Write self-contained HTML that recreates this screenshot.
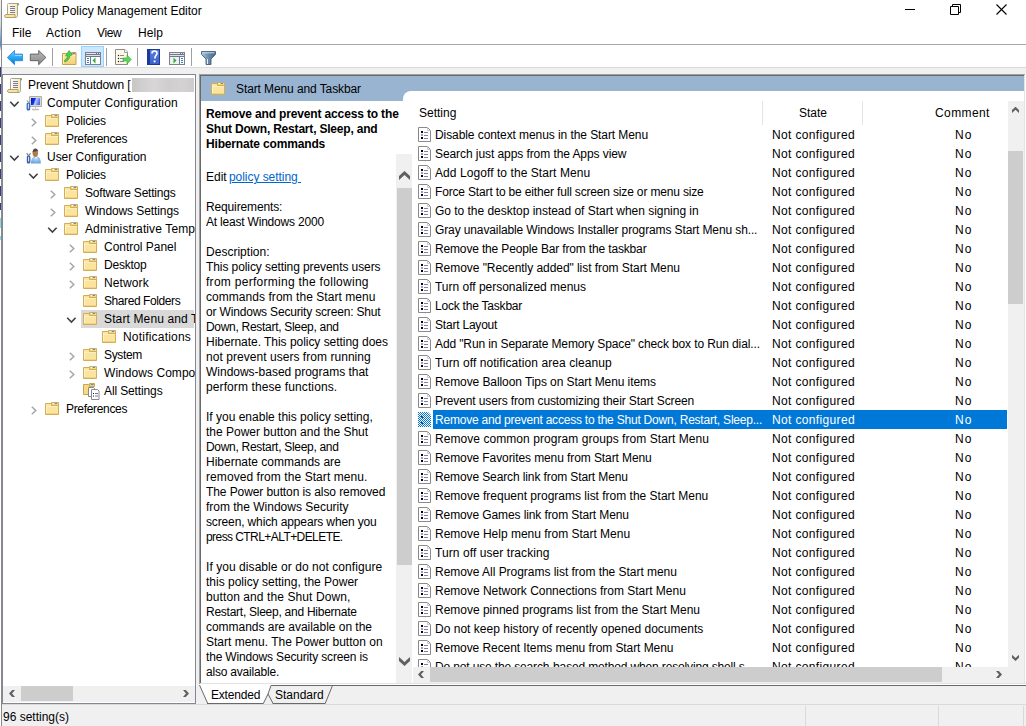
<!DOCTYPE html>
<html><head><meta charset="utf-8">
<style>
*{margin:0;padding:0;box-sizing:border-box}
html,body{width:1026px;height:726px;overflow:hidden;background:#fff}
body{position:relative;font-family:"Liberation Sans",sans-serif;font-size:12px;color:#000}
.a{position:absolute}
.t{position:absolute;white-space:nowrap;line-height:15px}
.tr{position:absolute;white-space:nowrap;line-height:18px;height:18px}
.lr{position:absolute;white-space:nowrap;line-height:19px;height:19px;overflow:hidden}
svg{position:absolute;overflow:visible}
</style></head><body>

<div class="a" style="left:0;top:0;width:1px;height:60px;background:linear-gradient(#f0f0f0,#d8dce8 40%,#4a8ad0 75%,#fff 85%)"></div><div class="a" style="left:0;top:60px;width:1px;height:150px;background:repeating-linear-gradient(#fff 0 7px,#3a3a8a 7px 17px)"></div><div class="a" style="left:0;top:210px;width:1px;height:30px;background:repeating-linear-gradient(#fff 0 8px,#8ad8e8 8px 18px)"></div>
<div class="a" style="left:1px;top:0;width:1px;height:726px;background:#8a8a8a"></div>
<svg style="left:4px;top:3px" width="16" height="16" viewBox="0 0 16 16">
 <defs><linearGradient id="sp" x1="0" y1="0" x2="1" y2="0"><stop offset="0" stop-color="#fffbe8"/><stop offset="1" stop-color="#f6e7b0"/></linearGradient></defs>
 <path d="M3.5 1.5c0-1 1-1 1.5-1h9.5c-0.6 0.6-1 1-1 2v10c0 1-0.5 2-1.5 2h-8.5v-12z" fill="url(#sp)" stroke="#a8a49a"/>
 <path d="M6 3.5h5M6 5.5h5M6 7.5h5M6 9.5h5" stroke="#7a78b0" stroke-width="1"/>
 <path d="M1.5 11.5h9.5v3h-9.5c-1 0-1.2-3 0-3z" fill="#f5e3a0" stroke="#b5a06a"/>
 <circle cx="14" cy="1.5" r="1" fill="#7aa050"/>
</svg>
<div class="t" style="left:25px;top:4px">Group Policy Management Editor</div>
<div class="a" style="left:905px;top:9px;width:10px;height:1px;background:#000"></div>
<svg style="left:950px;top:4px" width="11" height="11" viewBox="0 0 11 11"><path d="M0.5 2.5h8v8h-8z M2.5 2.5v-2h8v8h-2" fill="none" stroke="#000"/></svg>
<svg style="left:996px;top:4px" width="11" height="11" viewBox="0 0 11 11"><path d="M0.5 0.5l10 10M10.5 0.5l-10 10" stroke="#000" stroke-width="1.1"/></svg>
<div class="t" style="left:12px;top:26px;letter-spacing:0px">File</div>
<div class="t" style="left:46px;top:26px;letter-spacing:0.3px">Action</div>
<div class="t" style="left:97px;top:26px;letter-spacing:-0.4px">View</div>
<div class="t" style="left:138px;top:26px;letter-spacing:0.1px">Help</div>
<div class="a" style="left:2px;top:44px;width:1024px;height:1px;background:#a8a8a8"></div>
<svg style="left:7px;top:50px" width="17" height="15" viewBox="0 0 17 15">
<defs><linearGradient id="gb" x1="0" y1="0" x2="0" y2="1"><stop offset="0" stop-color="#6fd0ff"/><stop offset="0.5" stop-color="#2aa8f0"/><stop offset="1" stop-color="#0a70d0"/></linearGradient></defs>
<path d="M0.3 7.5l7.2-7v3.6h8v6.6h-8v4z" fill="url(#gb)" stroke="#2a8ee0" stroke-width="0.9"/>
<path d="M8 5.5h7" stroke="#a8e0ff" stroke-width="0.8"/></svg>
<svg style="left:30px;top:50px" width="17" height="15" viewBox="0 0 17 15">
<defs><linearGradient id="gg" x1="0" y1="0" x2="0" y2="1"><stop offset="0" stop-color="#b8b8b8"/><stop offset="1" stop-color="#8a8a8a"/></linearGradient></defs>
<path d="M15.9 7.5l-7.2-7v3.6h-8.4v6.6h8.4v4z" fill="url(#gg)" stroke="#5a5a5a" stroke-width="0.9"/></svg>
<div class="a" style="left:52px;top:48px;width:1px;height:18px;background:#a0a0a0"></div>
<svg style="left:62px;top:50px" width="15" height="15" viewBox="0 0 15 15">
<defs><linearGradient id="fu" x1="0" y1="0" x2="0" y2="1"><stop offset="0" stop-color="#fde7a6"/><stop offset="1" stop-color="#f3cf78"/></linearGradient></defs>
<path d="M0.5 3.5h7l1 1.5h5.5v9.5h-13.5z" fill="url(#fu)" stroke="#c9a04c"/>
<path d="M9.5 2.5h4.5v3h-4.5z" fill="#f0cd76" stroke="#c9a04c"/>
<path d="M10.5 3.5h2.5" stroke="#3f86e8"/>
<path d="M1.5 5.5v8" stroke="#fdf0c8"/>
<path d="M7.5 5.5h6" stroke="#fdf2cc"/>
<path d="M2.2 10.8c1.5-1.2 3-2.5 3.3-5.2l-2 0.2 3.6-5.3 3.2 4.6-2.2 0.3c-0.5 3.5-2.3 5.5-5.2 6.5z" fill="#4cd04c" stroke="#2a9a2a" stroke-width="0.6"/>
</svg>
<div class="a" style="left:81px;top:46px;width:23px;height:21px;background:#cce8ff;border:1px solid #99d1ff"></div>
<svg style="left:85px;top:52px" width="16" height="13" viewBox="0 0 16 13">
<rect x="0.5" y="0.5" width="15" height="12" fill="#fff" stroke="#80808a"/>
<rect x="1" y="1" width="14" height="1" fill="#e4e6ec"/><rect x="11" y="1" width="1" height="1" fill="#6a7890"/><rect x="13" y="1" width="1" height="1" fill="#6a7890"/>
<path d="M1 2.5h14M1 4.5h14" stroke="#6a7890"/>
<rect x="1" y="3" width="14" height="1" fill="#dfe2e8"/>
<path d="M5.5 5v7" stroke="#6a7890"/>
<rect x="2" y="6" width="2" height="1" fill="#3a78d0"/><rect x="2" y="8" width="2" height="1" fill="#3a78d0"/><rect x="2" y="10" width="2" height="1" fill="#3a78d0"/>
<path d="M7.5 8.5l3-3v6z" fill="#30b030"/>
</svg>
<div class="a" style="left:106px;top:48px;width:1px;height:18px;background:#a0a0a0"></div>
<svg style="left:115px;top:49px" width="17" height="16" viewBox="0 0 17 16">
<path d="M0.5 0.5h9.5l2.5 2.5v12.5h-12z" fill="#fdf8e2" stroke="#8c8c8c"/>
<path d="M9.5 0.5v3h3" fill="#fff" stroke="#a0a0a0"/>
<circle cx="3.5" cy="6.5" r="0.7" fill="#222"/><circle cx="3.5" cy="9.5" r="0.7" fill="#222"/><circle cx="3.5" cy="12.5" r="0.7" fill="#222"/>
<path d="M5 6.5h4M5 9.5h4M5 12.5h4" stroke="#7a78a8" stroke-width="0.9"/>
<path d="M8 9h4v-3l4.3 4.5-4.3 4.5v-3h-4z" fill="#5ad85a" stroke="#34a834" stroke-width="0.6"/>
</svg>
<div class="a" style="left:137px;top:48px;width:1px;height:18px;background:#a0a0a0"></div>
<svg style="left:147px;top:49px" width="13" height="16" viewBox="0 0 13 16">
<defs><linearGradient id="hb" x1="0" y1="0" x2="0" y2="1"><stop offset="0" stop-color="#5a80e0"/><stop offset="1" stop-color="#3a60c8"/></linearGradient></defs>
<rect x="0" y="0" width="13" height="16" fill="#1e3a98"/><rect x="3" y="1" width="9" height="14" fill="url(#hb)"/>
<path d="M5 4.5c0-1.5 1-2.5 2.5-2.5s2.5 1 2.5 2.5c0 1.5-2 2-2 4v1" fill="none" stroke="#fff" stroke-width="1.6"/>
<rect x="6.7" y="11.5" width="1.8" height="1.8" fill="#fff"/>
</svg>
<svg style="left:169px;top:52px" width="16" height="13" viewBox="0 0 16 13">
<rect x="0.5" y="0.5" width="15" height="12" fill="#fff" stroke="#80808a"/>
<rect x="1" y="1" width="14" height="1" fill="#e4e6ec"/><rect x="11" y="1" width="1" height="1" fill="#6a7890"/><rect x="13" y="1" width="1" height="1" fill="#6a7890"/>
<path d="M1 2.5h14M1 4.5h14" stroke="#6a7890"/>
<rect x="1" y="3" width="14" height="1" fill="#dfe2e8"/>
<rect x="1" y="5" width="9" height="7" fill="#f0f0f0"/>
<path d="M10.5 5v7" stroke="#6a7890"/>
<rect x="12" y="6" width="2" height="1" fill="#3a78d0"/><rect x="12" y="8" width="2" height="1" fill="#3a78d0"/><rect x="12" y="10" width="2" height="1" fill="#3a78d0"/>
<path d="M4.5 5.5l3 3-3 3z" fill="#30b030"/>
</svg>
<div class="a" style="left:191px;top:48px;width:1px;height:18px;background:#a0a0a0"></div>
<svg style="left:201px;top:51px" width="15" height="14" viewBox="0 0 15 14">
<defs><linearGradient id="gf" x1="0" y1="0" x2="1" y2="0"><stop offset="0" stop-color="#a8c8e8"/><stop offset="0.5" stop-color="#6a8aa8"/><stop offset="1" stop-color="#4a6a88"/></linearGradient></defs>
<path d="M0.5 0.5h14v3l-4.5 4.5v5.5h-5v-5.5l-4.5-4.5z" fill="url(#gf)" stroke="#4a6078" stroke-width="0.9"/>
<path d="M1.5 1.8h12" stroke="#c8e4ff" stroke-width="0.9"/>
<path d="M6.5 8v5" stroke="#e0f0ff" stroke-width="1"/>
</svg>
<div class="a" style="left:2px;top:67px;width:1024px;height:1px;background:#dadada"></div>
<div class="a" style="left:2px;top:68px;width:1024px;height:658px;background:#f0f0f0"></div>
<div class="a" style="left:2px;top:74px;width:194px;height:630px;border:1px solid #828790;background:#fff"></div>
<div class="a" style="left:132px;top:78px;width:62px;height:14px;background:linear-gradient(90deg,#c8c5c5,#d2d0d0 20%,#d8d6d6 35%,#cfcdcd 60%,#d4d2d2 80%,#cecbcb)"></div>
<svg style="left:7px;top:78px" width="16" height="16" viewBox="0 0 16 16">
 <defs><linearGradient id="sp2" x1="0" y1="0" x2="1" y2="0"><stop offset="0" stop-color="#fffbe8"/><stop offset="1" stop-color="#f6e7b0"/></linearGradient></defs>
 <path d="M3.5 1.5c0-1 1-1 1.5-1h9.5c-0.6 0.6-1 1-1 2v10c0 1-0.5 2-1.5 2h-8.5v-12z" fill="url(#sp2)" stroke="#a8a49a"/>
 <path d="M6 3.5h5M6 5.5h5M6 7.5h5M6 9.5h5" stroke="#7a78b0" stroke-width="1"/>
 <path d="M1.5 11.5h9.5v3h-9.5c-1 0-1.2-3 0-3z" fill="#f5e3a0" stroke="#b5a06a"/>
 <circle cx="14" cy="1.5" r="1" fill="#7aa050"/>
</svg>
<div class="a" style="left:81px;top:310px;width:113px;height:18px;background:#d9d9d9"></div>
<div class="a" style="left:3px;top:75px;width:192px;height:611px;overflow:hidden">
<div class="tr" style="left:25px;top:1px;letter-spacing:-0.124px">Prevent Shutdown [</div>
<svg style="left:6px;top:26px" width="10" height="6" viewBox="0 0 10 6"><path d="M1.2 0.8l4.2 4.2 4.2-4.2" fill="none" stroke="#404040" stroke-width="1.6"/></svg>
<svg style="left:23px;top:21px" width="17" height="15" viewBox="0 0 17 15">
<defs><linearGradient id="gs" x1="0" y1="0" x2="1" y2="0.3"><stop offset="0" stop-color="#0010b8"/><stop offset="0.45" stop-color="#1838e8"/><stop offset="0.6" stop-color="#b8d0ff"/><stop offset="1" stop-color="#5070f0"/></linearGradient></defs>
<path d="M3.5 0.5h12v10h-12z" fill="#dcdad0" stroke="#b0aea4"/>
<rect x="5" y="2" width="9" height="7" fill="url(#gs)"/>
<path d="M6 13.5h7" stroke="#c0beb4" stroke-width="1.6"/><path d="M9.5 10.5v2" stroke="#c8c6bc"/>
<path d="M0.8 4.2l1.2 1.8h1l1.2-1.8" fill="none" stroke="#a8a8a8" stroke-width="1.1"/>
<rect x="0.6" y="6.5" width="3.6" height="8" rx="1.5" fill="#3a68b8"/><rect x="1.9" y="7.8" width="1" height="4.8" fill="#d8f0ff"/>
</svg>
<div class="tr" style="left:44px;top:19px;letter-spacing:0.157px">Computer Configuration</div>
<svg style="left:28px;top:43px" width="6" height="9" viewBox="0 0 6 9"><path d="M0.8 0.8l4 3.7-4 3.7" fill="none" stroke="#a6a6a6" stroke-width="1.5"/></svg>
<svg style="left:42px;top:39px" width="14" height="13" viewBox="0 0 14 13">
<path d="M0.5 1.5h5.5l1 1.5h6.5v9.5h-13z" fill="#f9dc8c" stroke="#d2ae58"/>
<path d="M1 2h5l1 2h6v8h-12z" fill="#fbe4a0"/>
<path d="M1 4.5h12" stroke="#fdf0c0" stroke-width="1"/>
<path d="M1.5 3v9" stroke="#fdf2c8" stroke-width="1"/>
<path d="M1 11.5h12" stroke="#f3d47e" stroke-width="1"/>
<path d="M6.5 0.5h7v3h-7z" fill="#f6d77e" stroke="#d2ae58"/>
<path d="M8 1.5h4" stroke="#4f8ee8" stroke-width="1"/><path d="M8 1.5h1.5" stroke="#fff" stroke-width="1"/>
</svg>
<div class="tr" style="left:63px;top:37px;letter-spacing:-0.2px">Policies</div>
<svg style="left:28px;top:61px" width="6" height="9" viewBox="0 0 6 9"><path d="M0.8 0.8l4 3.7-4 3.7" fill="none" stroke="#a6a6a6" stroke-width="1.5"/></svg>
<svg style="left:42px;top:57px" width="14" height="13" viewBox="0 0 14 13">
<path d="M0.5 1.5h5.5l1 1.5h6.5v9.5h-13z" fill="#f9dc8c" stroke="#d2ae58"/>
<path d="M1 2h5l1 2h6v8h-12z" fill="#fbe4a0"/>
<path d="M1 4.5h12" stroke="#fdf0c0" stroke-width="1"/>
<path d="M1.5 3v9" stroke="#fdf2c8" stroke-width="1"/>
<path d="M1 11.5h12" stroke="#f3d47e" stroke-width="1"/>
<path d="M6.5 0.5h7v3h-7z" fill="#f6d77e" stroke="#d2ae58"/>
<path d="M8 1.5h4" stroke="#4f8ee8" stroke-width="1"/><path d="M8 1.5h1.5" stroke="#fff" stroke-width="1"/>
</svg>
<div class="tr" style="left:63px;top:55px;letter-spacing:-0.33px">Preferences</div>
<svg style="left:6px;top:80px" width="10" height="6" viewBox="0 0 10 6"><path d="M1.2 0.8l4.2 4.2 4.2-4.2" fill="none" stroke="#404040" stroke-width="1.6"/></svg>
<svg style="left:23px;top:73px" width="16" height="16" viewBox="0 0 16 16">
<defs><radialGradient id="gu" cx="0.5" cy="0.3" r="0.7"><stop offset="0" stop-color="#b8dcff"/><stop offset="1" stop-color="#6aa0d8"/></radialGradient></defs>
<path d="M5 15.5c0-4.5 1.5-7 5-7s4.8 2.5 4.8 7z" fill="url(#gu)"/>
<path d="M9 9l1 2 1-2z" fill="#fff"/>
<ellipse cx="9.3" cy="5.2" rx="2.7" ry="3.7" fill="#b87848"/>
<path d="M6.6 4.6c0-3 1.2-4.1 2.8-4.1s2.9 1.1 2.9 4.2l-0.6-1.6c-1.2 0.2-3.2 0.4-5.1 1.5z" fill="#4a4a4a"/>
<path d="M0.7 5.2l1.3 2h1.2l1.3-2" fill="none" stroke="#8a8a8a" stroke-width="1.2"/>
<rect x="0.8" y="7.5" width="3.6" height="8" rx="1.5" fill="#3a5ab0"/><rect x="2.1" y="8.8" width="1" height="4.8" fill="#d8f0ff"/>
</svg>
<div class="tr" style="left:44px;top:73px;letter-spacing:-0.035px">User Configuration</div>
<svg style="left:25px;top:98px" width="10" height="6" viewBox="0 0 10 6"><path d="M1.2 0.8l4.2 4.2 4.2-4.2" fill="none" stroke="#404040" stroke-width="1.6"/></svg>
<svg style="left:42px;top:93px" width="14" height="13" viewBox="0 0 14 13">
<path d="M0.5 1.5h5.5l1 1.5h6.5v9.5h-13z" fill="#f9dc8c" stroke="#d2ae58"/>
<path d="M1 2h5l1 2h6v8h-12z" fill="#fbe4a0"/>
<path d="M1 4.5h12" stroke="#fdf0c0" stroke-width="1"/>
<path d="M1.5 3v9" stroke="#fdf2c8" stroke-width="1"/>
<path d="M1 11.5h12" stroke="#f3d47e" stroke-width="1"/>
<path d="M6.5 0.5h7v3h-7z" fill="#f6d77e" stroke="#d2ae58"/>
<path d="M8 1.5h4" stroke="#4f8ee8" stroke-width="1"/><path d="M8 1.5h1.5" stroke="#fff" stroke-width="1"/>
</svg>
<div class="tr" style="left:63px;top:91px;letter-spacing:-0.2px">Policies</div>
<svg style="left:47px;top:115px" width="6" height="9" viewBox="0 0 6 9"><path d="M0.8 0.8l4 3.7-4 3.7" fill="none" stroke="#a6a6a6" stroke-width="1.5"/></svg>
<svg style="left:61px;top:111px" width="14" height="13" viewBox="0 0 14 13">
<path d="M0.5 1.5h5.5l1 1.5h6.5v9.5h-13z" fill="#f9dc8c" stroke="#d2ae58"/>
<path d="M1 2h5l1 2h6v8h-12z" fill="#fbe4a0"/>
<path d="M1 4.5h12" stroke="#fdf0c0" stroke-width="1"/>
<path d="M1.5 3v9" stroke="#fdf2c8" stroke-width="1"/>
<path d="M1 11.5h12" stroke="#f3d47e" stroke-width="1"/>
<path d="M6.5 0.5h7v3h-7z" fill="#f6d77e" stroke="#d2ae58"/>
<path d="M8 1.5h4" stroke="#4f8ee8" stroke-width="1"/><path d="M8 1.5h1.5" stroke="#fff" stroke-width="1"/>
</svg>
<div class="tr" style="left:82px;top:109px;letter-spacing:-0.206px">Software Settings</div>
<svg style="left:47px;top:133px" width="6" height="9" viewBox="0 0 6 9"><path d="M0.8 0.8l4 3.7-4 3.7" fill="none" stroke="#a6a6a6" stroke-width="1.5"/></svg>
<svg style="left:61px;top:129px" width="14" height="13" viewBox="0 0 14 13">
<path d="M0.5 1.5h5.5l1 1.5h6.5v9.5h-13z" fill="#f9dc8c" stroke="#d2ae58"/>
<path d="M1 2h5l1 2h6v8h-12z" fill="#fbe4a0"/>
<path d="M1 4.5h12" stroke="#fdf0c0" stroke-width="1"/>
<path d="M1.5 3v9" stroke="#fdf2c8" stroke-width="1"/>
<path d="M1 11.5h12" stroke="#f3d47e" stroke-width="1"/>
<path d="M6.5 0.5h7v3h-7z" fill="#f6d77e" stroke="#d2ae58"/>
<path d="M8 1.5h4" stroke="#4f8ee8" stroke-width="1"/><path d="M8 1.5h1.5" stroke="#fff" stroke-width="1"/>
</svg>
<div class="tr" style="left:82px;top:127px;letter-spacing:-0.093px">Windows Settings</div>
<svg style="left:44px;top:152px" width="10" height="6" viewBox="0 0 10 6"><path d="M1.2 0.8l4.2 4.2 4.2-4.2" fill="none" stroke="#404040" stroke-width="1.6"/></svg>
<svg style="left:61px;top:147px" width="14" height="13" viewBox="0 0 14 13">
<path d="M0.5 1.5h5.5l1 1.5h6.5v9.5h-13z" fill="#f9dc8c" stroke="#d2ae58"/>
<path d="M1 2h5l1 2h6v8h-12z" fill="#fbe4a0"/>
<path d="M1 4.5h12" stroke="#fdf0c0" stroke-width="1"/>
<path d="M1.5 3v9" stroke="#fdf2c8" stroke-width="1"/>
<path d="M1 11.5h12" stroke="#f3d47e" stroke-width="1"/>
<path d="M6.5 0.5h7v3h-7z" fill="#f6d77e" stroke="#d2ae58"/>
<path d="M8 1.5h4" stroke="#4f8ee8" stroke-width="1"/><path d="M8 1.5h1.5" stroke="#fff" stroke-width="1"/>
</svg>
<div class="tr" style="left:82px;top:145px;letter-spacing:0.12px">Administrative Templates: Policy definitions</div>
<svg style="left:66px;top:169px" width="6" height="9" viewBox="0 0 6 9"><path d="M0.8 0.8l4 3.7-4 3.7" fill="none" stroke="#a6a6a6" stroke-width="1.5"/></svg>
<svg style="left:80px;top:165px" width="14" height="13" viewBox="0 0 14 13">
<path d="M0.5 1.5h5.5l1 1.5h6.5v9.5h-13z" fill="#f9dc8c" stroke="#d2ae58"/>
<path d="M1 2h5l1 2h6v8h-12z" fill="#fbe4a0"/>
<path d="M1 4.5h12" stroke="#fdf0c0" stroke-width="1"/>
<path d="M1.5 3v9" stroke="#fdf2c8" stroke-width="1"/>
<path d="M1 11.5h12" stroke="#f3d47e" stroke-width="1"/>
<path d="M6.5 0.5h7v3h-7z" fill="#f6d77e" stroke="#d2ae58"/>
<path d="M8 1.5h4" stroke="#4f8ee8" stroke-width="1"/><path d="M8 1.5h1.5" stroke="#fff" stroke-width="1"/>
</svg>
<div class="tr" style="left:101px;top:163px;letter-spacing:-0.025px">Control Panel</div>
<svg style="left:66px;top:187px" width="6" height="9" viewBox="0 0 6 9"><path d="M0.8 0.8l4 3.7-4 3.7" fill="none" stroke="#a6a6a6" stroke-width="1.5"/></svg>
<svg style="left:80px;top:183px" width="14" height="13" viewBox="0 0 14 13">
<path d="M0.5 1.5h5.5l1 1.5h6.5v9.5h-13z" fill="#f9dc8c" stroke="#d2ae58"/>
<path d="M1 2h5l1 2h6v8h-12z" fill="#fbe4a0"/>
<path d="M1 4.5h12" stroke="#fdf0c0" stroke-width="1"/>
<path d="M1.5 3v9" stroke="#fdf2c8" stroke-width="1"/>
<path d="M1 11.5h12" stroke="#f3d47e" stroke-width="1"/>
<path d="M6.5 0.5h7v3h-7z" fill="#f6d77e" stroke="#d2ae58"/>
<path d="M8 1.5h4" stroke="#4f8ee8" stroke-width="1"/><path d="M8 1.5h1.5" stroke="#fff" stroke-width="1"/>
</svg>
<div class="tr" style="left:101px;top:181px;letter-spacing:-0.217px">Desktop</div>
<svg style="left:66px;top:205px" width="6" height="9" viewBox="0 0 6 9"><path d="M0.8 0.8l4 3.7-4 3.7" fill="none" stroke="#a6a6a6" stroke-width="1.5"/></svg>
<svg style="left:80px;top:201px" width="14" height="13" viewBox="0 0 14 13">
<path d="M0.5 1.5h5.5l1 1.5h6.5v9.5h-13z" fill="#f9dc8c" stroke="#d2ae58"/>
<path d="M1 2h5l1 2h6v8h-12z" fill="#fbe4a0"/>
<path d="M1 4.5h12" stroke="#fdf0c0" stroke-width="1"/>
<path d="M1.5 3v9" stroke="#fdf2c8" stroke-width="1"/>
<path d="M1 11.5h12" stroke="#f3d47e" stroke-width="1"/>
<path d="M6.5 0.5h7v3h-7z" fill="#f6d77e" stroke="#d2ae58"/>
<path d="M8 1.5h4" stroke="#4f8ee8" stroke-width="1"/><path d="M8 1.5h1.5" stroke="#fff" stroke-width="1"/>
</svg>
<div class="tr" style="left:101px;top:199px;letter-spacing:0.117px">Network</div>
<svg style="left:80px;top:219px" width="14" height="13" viewBox="0 0 14 13">
<path d="M0.5 1.5h5.5l1 1.5h6.5v9.5h-13z" fill="#f9dc8c" stroke="#d2ae58"/>
<path d="M1 2h5l1 2h6v8h-12z" fill="#fbe4a0"/>
<path d="M1 4.5h12" stroke="#fdf0c0" stroke-width="1"/>
<path d="M1.5 3v9" stroke="#fdf2c8" stroke-width="1"/>
<path d="M1 11.5h12" stroke="#f3d47e" stroke-width="1"/>
<path d="M6.5 0.5h7v3h-7z" fill="#f6d77e" stroke="#d2ae58"/>
<path d="M8 1.5h4" stroke="#4f8ee8" stroke-width="1"/><path d="M8 1.5h1.5" stroke="#fff" stroke-width="1"/>
</svg>
<div class="tr" style="left:101px;top:217px;letter-spacing:-0.415px">Shared Folders</div>
<svg style="left:63px;top:242px" width="10" height="6" viewBox="0 0 10 6"><path d="M1.2 0.8l4.2 4.2 4.2-4.2" fill="none" stroke="#404040" stroke-width="1.6"/></svg>
<svg style="left:80px;top:237px" width="14" height="13" viewBox="0 0 14 13">
<path d="M0.5 1.5h5.5l1 1.5h6.5v9.5h-13z" fill="#f9dc8c" stroke="#d2ae58"/>
<path d="M1 2h5l1 2h6v8h-12z" fill="#fbe4a0"/>
<path d="M1 4.5h12" stroke="#fdf0c0" stroke-width="1"/>
<path d="M1.5 3v9" stroke="#fdf2c8" stroke-width="1"/>
<path d="M1 11.5h12" stroke="#f3d47e" stroke-width="1"/>
<path d="M6.5 0.5h7v3h-7z" fill="#f6d77e" stroke="#d2ae58"/>
<path d="M8 1.5h4" stroke="#4f8ee8" stroke-width="1"/><path d="M8 1.5h1.5" stroke="#fff" stroke-width="1"/>
</svg>
<div class="tr" style="left:101px;top:235px;letter-spacing:0.13px">Start Menu and Taskbar</div>
<svg style="left:99px;top:255px" width="14" height="13" viewBox="0 0 14 13">
<path d="M0.5 1.5h5.5l1 1.5h6.5v9.5h-13z" fill="#f9dc8c" stroke="#d2ae58"/>
<path d="M1 2h5l1 2h6v8h-12z" fill="#fbe4a0"/>
<path d="M1 4.5h12" stroke="#fdf0c0" stroke-width="1"/>
<path d="M1.5 3v9" stroke="#fdf2c8" stroke-width="1"/>
<path d="M1 11.5h12" stroke="#f3d47e" stroke-width="1"/>
<path d="M6.5 0.5h7v3h-7z" fill="#f6d77e" stroke="#d2ae58"/>
<path d="M8 1.5h4" stroke="#4f8ee8" stroke-width="1"/><path d="M8 1.5h1.5" stroke="#fff" stroke-width="1"/>
</svg>
<div class="tr" style="left:120px;top:253px;letter-spacing:0.208px">Notifications</div>
<svg style="left:66px;top:277px" width="6" height="9" viewBox="0 0 6 9"><path d="M0.8 0.8l4 3.7-4 3.7" fill="none" stroke="#a6a6a6" stroke-width="1.5"/></svg>
<svg style="left:80px;top:273px" width="14" height="13" viewBox="0 0 14 13">
<path d="M0.5 1.5h5.5l1 1.5h6.5v9.5h-13z" fill="#f9dc8c" stroke="#d2ae58"/>
<path d="M1 2h5l1 2h6v8h-12z" fill="#fbe4a0"/>
<path d="M1 4.5h12" stroke="#fdf0c0" stroke-width="1"/>
<path d="M1.5 3v9" stroke="#fdf2c8" stroke-width="1"/>
<path d="M1 11.5h12" stroke="#f3d47e" stroke-width="1"/>
<path d="M6.5 0.5h7v3h-7z" fill="#f6d77e" stroke="#d2ae58"/>
<path d="M8 1.5h4" stroke="#4f8ee8" stroke-width="1"/><path d="M8 1.5h1.5" stroke="#fff" stroke-width="1"/>
</svg>
<div class="tr" style="left:101px;top:271px;letter-spacing:-0.36px">System</div>
<svg style="left:66px;top:295px" width="6" height="9" viewBox="0 0 6 9"><path d="M0.8 0.8l4 3.7-4 3.7" fill="none" stroke="#a6a6a6" stroke-width="1.5"/></svg>
<svg style="left:80px;top:291px" width="14" height="13" viewBox="0 0 14 13">
<path d="M0.5 1.5h5.5l1 1.5h6.5v9.5h-13z" fill="#f9dc8c" stroke="#d2ae58"/>
<path d="M1 2h5l1 2h6v8h-12z" fill="#fbe4a0"/>
<path d="M1 4.5h12" stroke="#fdf0c0" stroke-width="1"/>
<path d="M1.5 3v9" stroke="#fdf2c8" stroke-width="1"/>
<path d="M1 11.5h12" stroke="#f3d47e" stroke-width="1"/>
<path d="M6.5 0.5h7v3h-7z" fill="#f6d77e" stroke="#d2ae58"/>
<path d="M8 1.5h4" stroke="#4f8ee8" stroke-width="1"/><path d="M8 1.5h1.5" stroke="#fff" stroke-width="1"/>
</svg>
<div class="tr" style="left:101px;top:289px;letter-spacing:0.05px">Windows Components</div>
<svg style="left:80px;top:308px" width="17" height="17" viewBox="0 0 17 17">
<path d="M0.5 1.5h5l1 1h4v9h-10z" fill="#f8da86" stroke="#c9a451"/>
<path d="M6.5 0.5h5v3h-5z" fill="#f4d37a" stroke="#c9a451"/><path d="M8 1.5h2.5" stroke="#4f8ee8"/>
<path d="M5.5 4.5h5l1 1v8h-6z" fill="#fff" stroke="#8a8a8a"/>
<path d="M8.5 6.5h6l1.5 1.5v8.5h-7.5z" fill="#fff" stroke="#8a8a8a"/>
<path d="M10 10.5h1M10 13h1" stroke="#222"/><path d="M12 10.5h3M12 13h3" stroke="#7070b0"/>
</svg>
<div class="tr" style="left:101px;top:307px;letter-spacing:-0.127px">All Settings</div>
<svg style="left:28px;top:331px" width="6" height="9" viewBox="0 0 6 9"><path d="M0.8 0.8l4 3.7-4 3.7" fill="none" stroke="#a6a6a6" stroke-width="1.5"/></svg>
<svg style="left:42px;top:327px" width="14" height="13" viewBox="0 0 14 13">
<path d="M0.5 1.5h5.5l1 1.5h6.5v9.5h-13z" fill="#f9dc8c" stroke="#d2ae58"/>
<path d="M1 2h5l1 2h6v8h-12z" fill="#fbe4a0"/>
<path d="M1 4.5h12" stroke="#fdf0c0" stroke-width="1"/>
<path d="M1.5 3v9" stroke="#fdf2c8" stroke-width="1"/>
<path d="M1 11.5h12" stroke="#f3d47e" stroke-width="1"/>
<path d="M6.5 0.5h7v3h-7z" fill="#f6d77e" stroke="#d2ae58"/>
<path d="M8 1.5h4" stroke="#4f8ee8" stroke-width="1"/><path d="M8 1.5h1.5" stroke="#fff" stroke-width="1"/>
</svg>
<div class="tr" style="left:63px;top:325px;letter-spacing:-0.33px">Preferences</div>
</div>
<div class="a" style="left:3px;top:686px;width:192px;height:16px;background:#f0f0f0"></div>
<div class="a" style="left:21px;top:686px;width:52px;height:15px;background:#cdcdcd"></div>
<div class="a" style="left:199px;top:74px;width:827px;height:610px;background:#fff;border-left:1px solid #a0a0a0;border-top:1px solid #a0a0a0"></div>
<div class="a" style="left:200px;top:75px;width:826px;height:608px;border-left:1px solid #696969;border-top:1px solid #696969"></div>
<div class="a" style="left:1024px;top:75px;width:1px;height:609px;background:#e3e3e3"></div>
<div class="a" style="left:1025px;top:74px;width:1px;height:611px;background:#fff"></div>
<div class="a" style="left:200px;top:683px;width:826px;height:1px;background:#e3e3e3"></div>
<div class="a" style="left:201px;top:76px;width:823px;height:25px;background:#99b4d1"></div>
<svg style="left:211px;top:82px" width="14" height="13" viewBox="0 0 14 13">
<path d="M0.5 1.5h5.5l1 1.5h6.5v9.5h-13z" fill="#f9dc8c" stroke="#d2ae58"/>
<path d="M1 2h5l1 2h6v8h-12z" fill="#fbe4a0"/>
<path d="M1 4.5h12" stroke="#fdf0c0" stroke-width="1"/>
<path d="M1.5 3v9" stroke="#fdf2c8" stroke-width="1"/>
<path d="M1 11.5h12" stroke="#f3d47e" stroke-width="1"/>
<path d="M6.5 0.5h7v3h-7z" fill="#f6d77e" stroke="#d2ae58"/>
<path d="M8 1.5h4" stroke="#4f8ee8" stroke-width="1"/><path d="M8 1.5h1.5" stroke="#fff" stroke-width="1"/>
</svg>
<div class="t" style="left:236px;top:82px;color:#000;letter-spacing:-0.1px">Start Menu and Taskbar</div>
<div class="a" style="left:201px;top:101px;width:211px;height:582px;background:#fff"></div>
<div class="a" style="left:403px;top:91px;width:621px;height:576px;background:#fff;border-top-left-radius:8px"></div>
<div class="a" style="left:396px;top:101px;width:17px;height:582px;background:#fff"></div>
<div class="t" style="left:206px;top:107px;font-weight:bold;letter-spacing:-0.148px">Remove and prevent access to the</div>
<div class="t" style="left:206px;top:122px;font-weight:bold;letter-spacing:-0.197px">Shut Down, Restart, Sleep, and</div>
<div class="t" style="left:206px;top:137px;font-weight:bold;letter-spacing:-0.165px">Hibernate commands</div>
<div class="t" style="left:206px;top:170px">Edit</div>
<div class="t" style="left:229px;top:170px;color:#0066cc;text-decoration:underline;letter-spacing:-0.05px">policy setting&nbsp;</div>
<div class="t" style="left:206px;top:200px;letter-spacing:-0.142px">Requirements:</div>
<div class="t" style="left:206px;top:215px;letter-spacing:-0.2px">At least Windows 2000</div>
<div class="t" style="left:206px;top:245px;letter-spacing:0.018px">Description:</div>
<div class="t" style="left:206px;top:260px;letter-spacing:-0.085px">This policy setting prevents users</div>
<div class="t" style="left:206px;top:275px;letter-spacing:0.279px">from performing the following</div>
<div class="t" style="left:206px;top:290px;letter-spacing:0.048px">commands from the Start menu</div>
<div class="t" style="left:206px;top:305px;letter-spacing:-0.174px">or Windows Security screen: Shut</div>
<div class="t" style="left:206px;top:320px;letter-spacing:-0.296px">Down, Restart, Sleep, and</div>
<div class="t" style="left:206px;top:335px;letter-spacing:-0.038px">Hibernate. This policy setting does</div>
<div class="t" style="left:206px;top:350px;letter-spacing:0.045px">not prevent users from running</div>
<div class="t" style="left:206px;top:365px;letter-spacing:-0.012px">Windows-based programs that</div>
<div class="t" style="left:206px;top:380px;letter-spacing:0.104px">perform these functions.</div>
<div class="t" style="left:206px;top:410px;letter-spacing:0.0px">If you enable this policy setting,</div>
<div class="t" style="left:206px;top:425px;letter-spacing:0.0px">the Power button and the Shut</div>
<div class="t" style="left:206px;top:440px;letter-spacing:-0.3px">Down, Restart, Sleep, and</div>
<div class="t" style="left:206px;top:455px;letter-spacing:0.0px">Hibernate commands are</div>
<div class="t" style="left:206px;top:470px;letter-spacing:0.074px">removed from the Start menu.</div>
<div class="t" style="left:206px;top:485px;letter-spacing:-0.09px">The Power button is also removed</div>
<div class="t" style="left:206px;top:500px;letter-spacing:-0.008px">from the Windows Security</div>
<div class="t" style="left:206px;top:515px;letter-spacing:-0.138px">screen, which appears when you</div>
<div class="t" style="left:206px;top:530px;letter-spacing:-0.571px">press CTRL+ALT+DELETE.</div>
<div class="t" style="left:206px;top:560px;letter-spacing:0.061px">If you disable or do not configure</div>
<div class="t" style="left:206px;top:575px;letter-spacing:0.0px">this policy setting, the Power</div>
<div class="t" style="left:206px;top:590px;letter-spacing:0.092px">button and the Shut Down,</div>
<div class="t" style="left:206px;top:605px;letter-spacing:-0.257px">Restart, Sleep, and Hibernate</div>
<div class="t" style="left:206px;top:620px;letter-spacing:-0.029px">commands are available on the</div>
<div class="t" style="left:206px;top:635px;letter-spacing:0.0px">Start menu. The Power button on</div>
<div class="t" style="left:206px;top:650px;letter-spacing:-0.166px">the Windows Security screen is</div>
<div class="t" style="left:206px;top:665px;letter-spacing:-0.2px">also available.</div>
<div class="a" style="left:396px;top:154px;width:16px;height:529px;background:#f0f0f0"></div>
<div class="a" style="left:397px;top:188px;width:15px;height:377px;background:#cdcdcd"></div>
<div class="t" style="left:419px;top:106px">Setting</div>
<div class="t" style="left:799px;top:106px">State</div>
<div class="t" style="left:935px;top:106px;letter-spacing:0.4px">Comment</div>
<div class="a" style="left:762px;top:101px;width:1px;height:24px;background:#e5e5e5"></div>
<div class="a" style="left:862px;top:101px;width:1px;height:24px;background:#e5e5e5"></div>
<div class="a" style="left:413px;top:125px;width:595px;height:542px;overflow:hidden">
<svg style="left:5px;top:2px" width="13" height="15" viewBox="0 0 13 15">
<path d="M0.5 0.5h9l3 3v11h-12z" fill="#fff" stroke="#8a8a8a"/>
<path d="M9.5 0.5v3h3" fill="none" stroke="#c8c8c8"/>
<rect x="3" y="4" width="2" height="2" fill="#000"/><rect x="3" y="7" width="2" height="2" fill="#9a9ab8"/><rect x="3" y="10" width="2" height="2" fill="#000"/>
<path d="M6 5.5h4M6 8.5h4M6 11.5h4" stroke="#8080b0" stroke-width="1"/>
</svg>
<div class="lr" style="left:22px;top:1px;width:345px;color:#000;letter-spacing:-0.079px">Disable context menus in the Start Menu</div>
<div class="lr" style="left:359px;top:1px;color:#000;letter-spacing:0.35px">Not configured</div>
<div class="lr" style="left:542px;top:1px;color:#000;letter-spacing:1px">No</div>
<svg style="left:5px;top:21px" width="13" height="15" viewBox="0 0 13 15">
<path d="M0.5 0.5h9l3 3v11h-12z" fill="#fff" stroke="#8a8a8a"/>
<path d="M9.5 0.5v3h3" fill="none" stroke="#c8c8c8"/>
<rect x="3" y="4" width="2" height="2" fill="#000"/><rect x="3" y="7" width="2" height="2" fill="#9a9ab8"/><rect x="3" y="10" width="2" height="2" fill="#000"/>
<path d="M6 5.5h4M6 8.5h4M6 11.5h4" stroke="#8080b0" stroke-width="1"/>
</svg>
<div class="lr" style="left:22px;top:20px;width:345px;color:#000;letter-spacing:-0.076px">Search just apps from the Apps view</div>
<div class="lr" style="left:359px;top:20px;color:#000;letter-spacing:0.35px">Not configured</div>
<div class="lr" style="left:542px;top:20px;color:#000;letter-spacing:1px">No</div>
<svg style="left:5px;top:40px" width="13" height="15" viewBox="0 0 13 15">
<path d="M0.5 0.5h9l3 3v11h-12z" fill="#fff" stroke="#8a8a8a"/>
<path d="M9.5 0.5v3h3" fill="none" stroke="#c8c8c8"/>
<rect x="3" y="4" width="2" height="2" fill="#000"/><rect x="3" y="7" width="2" height="2" fill="#9a9ab8"/><rect x="3" y="10" width="2" height="2" fill="#000"/>
<path d="M6 5.5h4M6 8.5h4M6 11.5h4" stroke="#8080b0" stroke-width="1"/>
</svg>
<div class="lr" style="left:22px;top:39px;width:345px;color:#000;letter-spacing:0.07px">Add Logoff to the Start Menu</div>
<div class="lr" style="left:359px;top:39px;color:#000;letter-spacing:0.35px">Not configured</div>
<div class="lr" style="left:542px;top:39px;color:#000;letter-spacing:1px">No</div>
<svg style="left:5px;top:59px" width="13" height="15" viewBox="0 0 13 15">
<path d="M0.5 0.5h9l3 3v11h-12z" fill="#fff" stroke="#8a8a8a"/>
<path d="M9.5 0.5v3h3" fill="none" stroke="#c8c8c8"/>
<rect x="3" y="4" width="2" height="2" fill="#000"/><rect x="3" y="7" width="2" height="2" fill="#9a9ab8"/><rect x="3" y="10" width="2" height="2" fill="#000"/>
<path d="M6 5.5h4M6 8.5h4M6 11.5h4" stroke="#8080b0" stroke-width="1"/>
</svg>
<div class="lr" style="left:22px;top:58px;width:345px;color:#000;letter-spacing:-0.164px">Force Start to be either full screen size or menu size</div>
<div class="lr" style="left:359px;top:58px;color:#000;letter-spacing:0.35px">Not configured</div>
<div class="lr" style="left:542px;top:58px;color:#000;letter-spacing:1px">No</div>
<svg style="left:5px;top:78px" width="13" height="15" viewBox="0 0 13 15">
<path d="M0.5 0.5h9l3 3v11h-12z" fill="#fff" stroke="#8a8a8a"/>
<path d="M9.5 0.5v3h3" fill="none" stroke="#c8c8c8"/>
<rect x="3" y="4" width="2" height="2" fill="#000"/><rect x="3" y="7" width="2" height="2" fill="#9a9ab8"/><rect x="3" y="10" width="2" height="2" fill="#000"/>
<path d="M6 5.5h4M6 8.5h4M6 11.5h4" stroke="#8080b0" stroke-width="1"/>
</svg>
<div class="lr" style="left:22px;top:77px;width:345px;color:#000;letter-spacing:-0.024px">Go to the desktop instead of Start when signing in</div>
<div class="lr" style="left:359px;top:77px;color:#000;letter-spacing:0.35px">Not configured</div>
<div class="lr" style="left:542px;top:77px;color:#000;letter-spacing:1px">No</div>
<svg style="left:5px;top:97px" width="13" height="15" viewBox="0 0 13 15">
<path d="M0.5 0.5h9l3 3v11h-12z" fill="#fff" stroke="#8a8a8a"/>
<path d="M9.5 0.5v3h3" fill="none" stroke="#c8c8c8"/>
<rect x="3" y="4" width="2" height="2" fill="#000"/><rect x="3" y="7" width="2" height="2" fill="#9a9ab8"/><rect x="3" y="10" width="2" height="2" fill="#000"/>
<path d="M6 5.5h4M6 8.5h4M6 11.5h4" stroke="#8080b0" stroke-width="1"/>
</svg>
<div class="lr" style="left:22px;top:96px;width:345px;color:#000;letter-spacing:-0.119px">Gray unavailable Windows Installer programs Start Menu sh...</div>
<div class="lr" style="left:359px;top:96px;color:#000;letter-spacing:0.35px">Not configured</div>
<div class="lr" style="left:542px;top:96px;color:#000;letter-spacing:1px">No</div>
<svg style="left:5px;top:116px" width="13" height="15" viewBox="0 0 13 15">
<path d="M0.5 0.5h9l3 3v11h-12z" fill="#fff" stroke="#8a8a8a"/>
<path d="M9.5 0.5v3h3" fill="none" stroke="#c8c8c8"/>
<rect x="3" y="4" width="2" height="2" fill="#000"/><rect x="3" y="7" width="2" height="2" fill="#9a9ab8"/><rect x="3" y="10" width="2" height="2" fill="#000"/>
<path d="M6 5.5h4M6 8.5h4M6 11.5h4" stroke="#8080b0" stroke-width="1"/>
</svg>
<div class="lr" style="left:22px;top:115px;width:345px;color:#000;letter-spacing:-0.157px">Remove the People Bar from the taskbar</div>
<div class="lr" style="left:359px;top:115px;color:#000;letter-spacing:0.35px">Not configured</div>
<div class="lr" style="left:542px;top:115px;color:#000;letter-spacing:1px">No</div>
<svg style="left:5px;top:135px" width="13" height="15" viewBox="0 0 13 15">
<path d="M0.5 0.5h9l3 3v11h-12z" fill="#fff" stroke="#8a8a8a"/>
<path d="M9.5 0.5v3h3" fill="none" stroke="#c8c8c8"/>
<rect x="3" y="4" width="2" height="2" fill="#000"/><rect x="3" y="7" width="2" height="2" fill="#9a9ab8"/><rect x="3" y="10" width="2" height="2" fill="#000"/>
<path d="M6 5.5h4M6 8.5h4M6 11.5h4" stroke="#8080b0" stroke-width="1"/>
</svg>
<div class="lr" style="left:22px;top:134px;width:345px;color:#000;letter-spacing:-0.053px">Remove "Recently added" list from Start Menu</div>
<div class="lr" style="left:359px;top:134px;color:#000;letter-spacing:0.35px">Not configured</div>
<div class="lr" style="left:542px;top:134px;color:#000;letter-spacing:1px">No</div>
<svg style="left:5px;top:154px" width="13" height="15" viewBox="0 0 13 15">
<path d="M0.5 0.5h9l3 3v11h-12z" fill="#fff" stroke="#8a8a8a"/>
<path d="M9.5 0.5v3h3" fill="none" stroke="#c8c8c8"/>
<rect x="3" y="4" width="2" height="2" fill="#000"/><rect x="3" y="7" width="2" height="2" fill="#9a9ab8"/><rect x="3" y="10" width="2" height="2" fill="#000"/>
<path d="M6 5.5h4M6 8.5h4M6 11.5h4" stroke="#8080b0" stroke-width="1"/>
</svg>
<div class="lr" style="left:22px;top:153px;width:345px;color:#000;letter-spacing:-0.015px">Turn off personalized menus</div>
<div class="lr" style="left:359px;top:153px;color:#000;letter-spacing:0.35px">Not configured</div>
<div class="lr" style="left:542px;top:153px;color:#000;letter-spacing:1px">No</div>
<svg style="left:5px;top:173px" width="13" height="15" viewBox="0 0 13 15">
<path d="M0.5 0.5h9l3 3v11h-12z" fill="#fff" stroke="#8a8a8a"/>
<path d="M9.5 0.5v3h3" fill="none" stroke="#c8c8c8"/>
<rect x="3" y="4" width="2" height="2" fill="#000"/><rect x="3" y="7" width="2" height="2" fill="#9a9ab8"/><rect x="3" y="10" width="2" height="2" fill="#000"/>
<path d="M6 5.5h4M6 8.5h4M6 11.5h4" stroke="#8080b0" stroke-width="1"/>
</svg>
<div class="lr" style="left:22px;top:172px;width:345px;color:#000;letter-spacing:-0.213px">Lock the Taskbar</div>
<div class="lr" style="left:359px;top:172px;color:#000;letter-spacing:0.35px">Not configured</div>
<div class="lr" style="left:542px;top:172px;color:#000;letter-spacing:1px">No</div>
<svg style="left:5px;top:192px" width="13" height="15" viewBox="0 0 13 15">
<path d="M0.5 0.5h9l3 3v11h-12z" fill="#fff" stroke="#8a8a8a"/>
<path d="M9.5 0.5v3h3" fill="none" stroke="#c8c8c8"/>
<rect x="3" y="4" width="2" height="2" fill="#000"/><rect x="3" y="7" width="2" height="2" fill="#9a9ab8"/><rect x="3" y="10" width="2" height="2" fill="#000"/>
<path d="M6 5.5h4M6 8.5h4M6 11.5h4" stroke="#8080b0" stroke-width="1"/>
</svg>
<div class="lr" style="left:22px;top:191px;width:345px;color:#000;letter-spacing:-0.209px">Start Layout</div>
<div class="lr" style="left:359px;top:191px;color:#000;letter-spacing:0.35px">Not configured</div>
<div class="lr" style="left:542px;top:191px;color:#000;letter-spacing:1px">No</div>
<svg style="left:5px;top:211px" width="13" height="15" viewBox="0 0 13 15">
<path d="M0.5 0.5h9l3 3v11h-12z" fill="#fff" stroke="#8a8a8a"/>
<path d="M9.5 0.5v3h3" fill="none" stroke="#c8c8c8"/>
<rect x="3" y="4" width="2" height="2" fill="#000"/><rect x="3" y="7" width="2" height="2" fill="#9a9ab8"/><rect x="3" y="10" width="2" height="2" fill="#000"/>
<path d="M6 5.5h4M6 8.5h4M6 11.5h4" stroke="#8080b0" stroke-width="1"/>
</svg>
<div class="lr" style="left:22px;top:210px;width:345px;color:#000;letter-spacing:-0.121px">Add "Run in Separate Memory Space" check box to Run dial...</div>
<div class="lr" style="left:359px;top:210px;color:#000;letter-spacing:0.35px">Not configured</div>
<div class="lr" style="left:542px;top:210px;color:#000;letter-spacing:1px">No</div>
<svg style="left:5px;top:230px" width="13" height="15" viewBox="0 0 13 15">
<path d="M0.5 0.5h9l3 3v11h-12z" fill="#fff" stroke="#8a8a8a"/>
<path d="M9.5 0.5v3h3" fill="none" stroke="#c8c8c8"/>
<rect x="3" y="4" width="2" height="2" fill="#000"/><rect x="3" y="7" width="2" height="2" fill="#9a9ab8"/><rect x="3" y="10" width="2" height="2" fill="#000"/>
<path d="M6 5.5h4M6 8.5h4M6 11.5h4" stroke="#8080b0" stroke-width="1"/>
</svg>
<div class="lr" style="left:22px;top:229px;width:345px;color:#000;letter-spacing:0.076px">Turn off notification area cleanup</div>
<div class="lr" style="left:359px;top:229px;color:#000;letter-spacing:0.35px">Not configured</div>
<div class="lr" style="left:542px;top:229px;color:#000;letter-spacing:1px">No</div>
<svg style="left:5px;top:249px" width="13" height="15" viewBox="0 0 13 15">
<path d="M0.5 0.5h9l3 3v11h-12z" fill="#fff" stroke="#8a8a8a"/>
<path d="M9.5 0.5v3h3" fill="none" stroke="#c8c8c8"/>
<rect x="3" y="4" width="2" height="2" fill="#000"/><rect x="3" y="7" width="2" height="2" fill="#9a9ab8"/><rect x="3" y="10" width="2" height="2" fill="#000"/>
<path d="M6 5.5h4M6 8.5h4M6 11.5h4" stroke="#8080b0" stroke-width="1"/>
</svg>
<div class="lr" style="left:22px;top:248px;width:345px;color:#000;letter-spacing:-0.084px">Remove Balloon Tips on Start Menu items</div>
<div class="lr" style="left:359px;top:248px;color:#000;letter-spacing:0.35px">Not configured</div>
<div class="lr" style="left:542px;top:248px;color:#000;letter-spacing:1px">No</div>
<svg style="left:5px;top:268px" width="13" height="15" viewBox="0 0 13 15">
<path d="M0.5 0.5h9l3 3v11h-12z" fill="#fff" stroke="#8a8a8a"/>
<path d="M9.5 0.5v3h3" fill="none" stroke="#c8c8c8"/>
<rect x="3" y="4" width="2" height="2" fill="#000"/><rect x="3" y="7" width="2" height="2" fill="#9a9ab8"/><rect x="3" y="10" width="2" height="2" fill="#000"/>
<path d="M6 5.5h4M6 8.5h4M6 11.5h4" stroke="#8080b0" stroke-width="1"/>
</svg>
<div class="lr" style="left:22px;top:267px;width:345px;color:#000;letter-spacing:-0.115px">Prevent users from customizing their Start Screen</div>
<div class="lr" style="left:359px;top:267px;color:#000;letter-spacing:0.35px">Not configured</div>
<div class="lr" style="left:542px;top:267px;color:#000;letter-spacing:1px">No</div>
<div class="a" style="left:20px;top:285px;width:574px;height:19px;background:#0078d7"></div>
<svg style="left:5px;top:287px" width="13" height="15" viewBox="0 0 13 15">
<defs><pattern id="dith" width="2" height="2" patternUnits="userSpaceOnUse"><rect width="1" height="1" fill="#0078d7"/><rect x="1" y="1" width="1" height="1" fill="#0078d7"/><rect x="1" width="1" height="1" fill="#fff"/><rect y="1" width="1" height="1" fill="#fff"/></pattern></defs>
<path d="M0 0h10l3 3v12h-13z" fill="url(#dith)"/>
<path d="M3 4l2 2M3 10l2 2" stroke="#333" stroke-width="1"/>
</svg>
<div class="lr" style="left:22px;top:286px;width:345px;color:#fff;letter-spacing:-0.215px">Remove and prevent access to the Shut Down, Restart, Sleep...</div>
<div class="lr" style="left:359px;top:286px;color:#fff;letter-spacing:0.35px">Not configured</div>
<div class="lr" style="left:542px;top:286px;color:#fff;letter-spacing:1px">No</div>
<svg style="left:5px;top:306px" width="13" height="15" viewBox="0 0 13 15">
<path d="M0.5 0.5h9l3 3v11h-12z" fill="#fff" stroke="#8a8a8a"/>
<path d="M9.5 0.5v3h3" fill="none" stroke="#c8c8c8"/>
<rect x="3" y="4" width="2" height="2" fill="#000"/><rect x="3" y="7" width="2" height="2" fill="#9a9ab8"/><rect x="3" y="10" width="2" height="2" fill="#000"/>
<path d="M6 5.5h4M6 8.5h4M6 11.5h4" stroke="#8080b0" stroke-width="1"/>
</svg>
<div class="lr" style="left:22px;top:305px;width:345px;color:#000;letter-spacing:0.058px">Remove common program groups from Start Menu</div>
<div class="lr" style="left:359px;top:305px;color:#000;letter-spacing:0.35px">Not configured</div>
<div class="lr" style="left:542px;top:305px;color:#000;letter-spacing:1px">No</div>
<svg style="left:5px;top:325px" width="13" height="15" viewBox="0 0 13 15">
<path d="M0.5 0.5h9l3 3v11h-12z" fill="#fff" stroke="#8a8a8a"/>
<path d="M9.5 0.5v3h3" fill="none" stroke="#c8c8c8"/>
<rect x="3" y="4" width="2" height="2" fill="#000"/><rect x="3" y="7" width="2" height="2" fill="#9a9ab8"/><rect x="3" y="10" width="2" height="2" fill="#000"/>
<path d="M6 5.5h4M6 8.5h4M6 11.5h4" stroke="#8080b0" stroke-width="1"/>
</svg>
<div class="lr" style="left:22px;top:324px;width:345px;color:#000;letter-spacing:-0.092px">Remove Favorites menu from Start Menu</div>
<div class="lr" style="left:359px;top:324px;color:#000;letter-spacing:0.35px">Not configured</div>
<div class="lr" style="left:542px;top:324px;color:#000;letter-spacing:1px">No</div>
<svg style="left:5px;top:344px" width="13" height="15" viewBox="0 0 13 15">
<path d="M0.5 0.5h9l3 3v11h-12z" fill="#fff" stroke="#8a8a8a"/>
<path d="M9.5 0.5v3h3" fill="none" stroke="#c8c8c8"/>
<rect x="3" y="4" width="2" height="2" fill="#000"/><rect x="3" y="7" width="2" height="2" fill="#9a9ab8"/><rect x="3" y="10" width="2" height="2" fill="#000"/>
<path d="M6 5.5h4M6 8.5h4M6 11.5h4" stroke="#8080b0" stroke-width="1"/>
</svg>
<div class="lr" style="left:22px;top:343px;width:345px;color:#000;letter-spacing:-0.115px">Remove Search link from Start Menu</div>
<div class="lr" style="left:359px;top:343px;color:#000;letter-spacing:0.35px">Not configured</div>
<div class="lr" style="left:542px;top:343px;color:#000;letter-spacing:1px">No</div>
<svg style="left:5px;top:363px" width="13" height="15" viewBox="0 0 13 15">
<path d="M0.5 0.5h9l3 3v11h-12z" fill="#fff" stroke="#8a8a8a"/>
<path d="M9.5 0.5v3h3" fill="none" stroke="#c8c8c8"/>
<rect x="3" y="4" width="2" height="2" fill="#000"/><rect x="3" y="7" width="2" height="2" fill="#9a9ab8"/><rect x="3" y="10" width="2" height="2" fill="#000"/>
<path d="M6 5.5h4M6 8.5h4M6 11.5h4" stroke="#8080b0" stroke-width="1"/>
</svg>
<div class="lr" style="left:22px;top:362px;width:345px;color:#000;letter-spacing:-0.004px">Remove frequent programs list from the Start Menu</div>
<div class="lr" style="left:359px;top:362px;color:#000;letter-spacing:0.35px">Not configured</div>
<div class="lr" style="left:542px;top:362px;color:#000;letter-spacing:1px">No</div>
<svg style="left:5px;top:382px" width="13" height="15" viewBox="0 0 13 15">
<path d="M0.5 0.5h9l3 3v11h-12z" fill="#fff" stroke="#8a8a8a"/>
<path d="M9.5 0.5v3h3" fill="none" stroke="#c8c8c8"/>
<rect x="3" y="4" width="2" height="2" fill="#000"/><rect x="3" y="7" width="2" height="2" fill="#9a9ab8"/><rect x="3" y="10" width="2" height="2" fill="#000"/>
<path d="M6 5.5h4M6 8.5h4M6 11.5h4" stroke="#8080b0" stroke-width="1"/>
</svg>
<div class="lr" style="left:22px;top:381px;width:345px;color:#000;letter-spacing:-0.106px">Remove Games link from Start Menu</div>
<div class="lr" style="left:359px;top:381px;color:#000;letter-spacing:0.35px">Not configured</div>
<div class="lr" style="left:542px;top:381px;color:#000;letter-spacing:1px">No</div>
<svg style="left:5px;top:401px" width="13" height="15" viewBox="0 0 13 15">
<path d="M0.5 0.5h9l3 3v11h-12z" fill="#fff" stroke="#8a8a8a"/>
<path d="M9.5 0.5v3h3" fill="none" stroke="#c8c8c8"/>
<rect x="3" y="4" width="2" height="2" fill="#000"/><rect x="3" y="7" width="2" height="2" fill="#9a9ab8"/><rect x="3" y="10" width="2" height="2" fill="#000"/>
<path d="M6 5.5h4M6 8.5h4M6 11.5h4" stroke="#8080b0" stroke-width="1"/>
</svg>
<div class="lr" style="left:22px;top:400px;width:345px;color:#000;letter-spacing:-0.01px">Remove Help menu from Start Menu</div>
<div class="lr" style="left:359px;top:400px;color:#000;letter-spacing:0.35px">Not configured</div>
<div class="lr" style="left:542px;top:400px;color:#000;letter-spacing:1px">No</div>
<svg style="left:5px;top:420px" width="13" height="15" viewBox="0 0 13 15">
<path d="M0.5 0.5h9l3 3v11h-12z" fill="#fff" stroke="#8a8a8a"/>
<path d="M9.5 0.5v3h3" fill="none" stroke="#c8c8c8"/>
<rect x="3" y="4" width="2" height="2" fill="#000"/><rect x="3" y="7" width="2" height="2" fill="#9a9ab8"/><rect x="3" y="10" width="2" height="2" fill="#000"/>
<path d="M6 5.5h4M6 8.5h4M6 11.5h4" stroke="#8080b0" stroke-width="1"/>
</svg>
<div class="lr" style="left:22px;top:419px;width:345px;color:#000;letter-spacing:0.081px">Turn off user tracking</div>
<div class="lr" style="left:359px;top:419px;color:#000;letter-spacing:0.35px">Not configured</div>
<div class="lr" style="left:542px;top:419px;color:#000;letter-spacing:1px">No</div>
<svg style="left:5px;top:439px" width="13" height="15" viewBox="0 0 13 15">
<path d="M0.5 0.5h9l3 3v11h-12z" fill="#fff" stroke="#8a8a8a"/>
<path d="M9.5 0.5v3h3" fill="none" stroke="#c8c8c8"/>
<rect x="3" y="4" width="2" height="2" fill="#000"/><rect x="3" y="7" width="2" height="2" fill="#9a9ab8"/><rect x="3" y="10" width="2" height="2" fill="#000"/>
<path d="M6 5.5h4M6 8.5h4M6 11.5h4" stroke="#8080b0" stroke-width="1"/>
</svg>
<div class="lr" style="left:22px;top:438px;width:345px;color:#000;letter-spacing:-0.035px">Remove All Programs list from the Start menu</div>
<div class="lr" style="left:359px;top:438px;color:#000;letter-spacing:0.35px">Not configured</div>
<div class="lr" style="left:542px;top:438px;color:#000;letter-spacing:1px">No</div>
<svg style="left:5px;top:458px" width="13" height="15" viewBox="0 0 13 15">
<path d="M0.5 0.5h9l3 3v11h-12z" fill="#fff" stroke="#8a8a8a"/>
<path d="M9.5 0.5v3h3" fill="none" stroke="#c8c8c8"/>
<rect x="3" y="4" width="2" height="2" fill="#000"/><rect x="3" y="7" width="2" height="2" fill="#9a9ab8"/><rect x="3" y="10" width="2" height="2" fill="#000"/>
<path d="M6 5.5h4M6 8.5h4M6 11.5h4" stroke="#8080b0" stroke-width="1"/>
</svg>
<div class="lr" style="left:22px;top:457px;width:345px;color:#000;letter-spacing:-0.015px">Remove Network Connections from Start Menu</div>
<div class="lr" style="left:359px;top:457px;color:#000;letter-spacing:0.35px">Not configured</div>
<div class="lr" style="left:542px;top:457px;color:#000;letter-spacing:1px">No</div>
<svg style="left:5px;top:477px" width="13" height="15" viewBox="0 0 13 15">
<path d="M0.5 0.5h9l3 3v11h-12z" fill="#fff" stroke="#8a8a8a"/>
<path d="M9.5 0.5v3h3" fill="none" stroke="#c8c8c8"/>
<rect x="3" y="4" width="2" height="2" fill="#000"/><rect x="3" y="7" width="2" height="2" fill="#9a9ab8"/><rect x="3" y="10" width="2" height="2" fill="#000"/>
<path d="M6 5.5h4M6 8.5h4M6 11.5h4" stroke="#8080b0" stroke-width="1"/>
</svg>
<div class="lr" style="left:22px;top:476px;width:345px;color:#000;letter-spacing:-0.009px">Remove pinned programs list from the Start Menu</div>
<div class="lr" style="left:359px;top:476px;color:#000;letter-spacing:0.35px">Not configured</div>
<div class="lr" style="left:542px;top:476px;color:#000;letter-spacing:1px">No</div>
<svg style="left:5px;top:496px" width="13" height="15" viewBox="0 0 13 15">
<path d="M0.5 0.5h9l3 3v11h-12z" fill="#fff" stroke="#8a8a8a"/>
<path d="M9.5 0.5v3h3" fill="none" stroke="#c8c8c8"/>
<rect x="3" y="4" width="2" height="2" fill="#000"/><rect x="3" y="7" width="2" height="2" fill="#9a9ab8"/><rect x="3" y="10" width="2" height="2" fill="#000"/>
<path d="M6 5.5h4M6 8.5h4M6 11.5h4" stroke="#8080b0" stroke-width="1"/>
</svg>
<div class="lr" style="left:22px;top:495px;width:345px;color:#000;letter-spacing:0.017px">Do not keep history of recently opened documents</div>
<div class="lr" style="left:359px;top:495px;color:#000;letter-spacing:0.35px">Not configured</div>
<div class="lr" style="left:542px;top:495px;color:#000;letter-spacing:1px">No</div>
<svg style="left:5px;top:515px" width="13" height="15" viewBox="0 0 13 15">
<path d="M0.5 0.5h9l3 3v11h-12z" fill="#fff" stroke="#8a8a8a"/>
<path d="M9.5 0.5v3h3" fill="none" stroke="#c8c8c8"/>
<rect x="3" y="4" width="2" height="2" fill="#000"/><rect x="3" y="7" width="2" height="2" fill="#9a9ab8"/><rect x="3" y="10" width="2" height="2" fill="#000"/>
<path d="M6 5.5h4M6 8.5h4M6 11.5h4" stroke="#8080b0" stroke-width="1"/>
</svg>
<div class="lr" style="left:22px;top:514px;width:345px;color:#000;letter-spacing:-0.077px">Remove Recent Items menu from Start Menu</div>
<div class="lr" style="left:359px;top:514px;color:#000;letter-spacing:0.35px">Not configured</div>
<div class="lr" style="left:542px;top:514px;color:#000;letter-spacing:1px">No</div>
<svg style="left:5px;top:534px" width="13" height="15" viewBox="0 0 13 15">
<path d="M0.5 0.5h9l3 3v11h-12z" fill="#fff" stroke="#8a8a8a"/>
<path d="M9.5 0.5v3h3" fill="none" stroke="#c8c8c8"/>
<rect x="3" y="4" width="2" height="2" fill="#000"/><rect x="3" y="7" width="2" height="2" fill="#9a9ab8"/><rect x="3" y="10" width="2" height="2" fill="#000"/>
<path d="M6 5.5h4M6 8.5h4M6 11.5h4" stroke="#8080b0" stroke-width="1"/>
</svg>
<div class="lr" style="left:22px;top:533px;width:345px;color:#000;letter-spacing:-0.15px">Do not use the search-based method when resolving shell s...</div>
<div class="lr" style="left:359px;top:533px;color:#000;letter-spacing:0.35px">Not configured</div>
<div class="lr" style="left:542px;top:533px;color:#000;letter-spacing:1px">No</div>
</div>
<div class="a" style="left:1008px;top:101px;width:16px;height:566px;background:#f0f0f0"></div>
<div class="a" style="left:1008px;top:151px;width:15px;height:153px;background:#cdcdcd"></div>
<div class="a" style="left:413px;top:667px;width:611px;height:16px;background:#f0f0f0"></div>
<div class="a" style="left:430px;top:667px;width:512px;height:15px;background:#cdcdcd"></div>
<div class="a" style="left:199px;top:684px;width:827px;height:20px;background:#f0f0f0"></div>
<div class="a" style="left:200px;top:684px;width:826px;height:1px;background:#fff"></div>
<div class="a" style="left:270px;top:685px;width:756px;height:1px;background:#696969"></div>
<svg style="left:0;top:0" width="1026" height="726">
<polygon points="199,684.5 272,684.5 271,685.5 268,694 263.3,703 207.5,703" fill="#fff"/>
<path d="M199.5 685 L207.5 703" stroke="#696969" stroke-width="1" fill="none"/>
<path d="M207 703.5 H263.5" stroke="#696969" stroke-width="1"/>
<path d="M263.3 703.5 L268 694 L271 685.5" stroke="#696969" stroke-width="1" fill="none"/>
<path d="M268 694 L272.8 703" stroke="#696969" stroke-width="1" fill="none"/>
<path d="M272.5 703.5 H325.5" stroke="#696969" stroke-width="1"/>
<path d="M332.5 685.5 L325.3 703.2" stroke="#696969" stroke-width="1" fill="none"/>
</svg>
<div class="t" style="left:211px;top:688px;letter-spacing:-0.2px">Extended</div>
<div class="t" style="left:275px;top:688px">Standard</div>
<div class="a" style="left:2px;top:704px;width:1024px;height:1px;background:#dadada"></div>
<div class="t" style="left:3px;top:710px">96 setting(s)</div>
<div class="a" style="left:805px;top:706px;width:1px;height:20px;background:#d9d9d9"></div>
<div class="a" style="left:938px;top:706px;width:1px;height:20px;background:#d9d9d9"></div>
<div class="a" style="left:1023px;top:706px;width:1px;height:20px;background:#d9d9d9"></div>
<svg style="left:0;top:0" width="1026" height="726"><polygon points="399,176 404.5,171 410,176 410,180 404.5,175 399,180" fill="#606060"/><polygon points="399,657 404.5,662 410,657 410,661 404.5,666 399,661" fill="#606060"/><polygon points="1012,110 1015.5,106.8 1019,110 1019,113 1015.5,109.8 1012,113" fill="#606060"/><polygon points="1012,654.8 1015.5,658 1019,654.8 1019,657.8 1015.5,661 1012,657.8" fill="#606060"/><polygon points="424,671 421.2,671 418,674.5 421.2,678 424,678 421,674.5" fill="#606060"/><polygon points="996,671 998.8,671 1002,674.5 998.8,678 996,678 999,674.5" fill="#606060"/><polygon points="15,690 12.2,690 9,693.5 12.2,697 15,697 12,693.5" fill="#606060"/><polygon points="183,690 185.8,690 189,693.5 185.8,697 183,697 186,693.5" fill="#606060"/></svg>
</body></html>
